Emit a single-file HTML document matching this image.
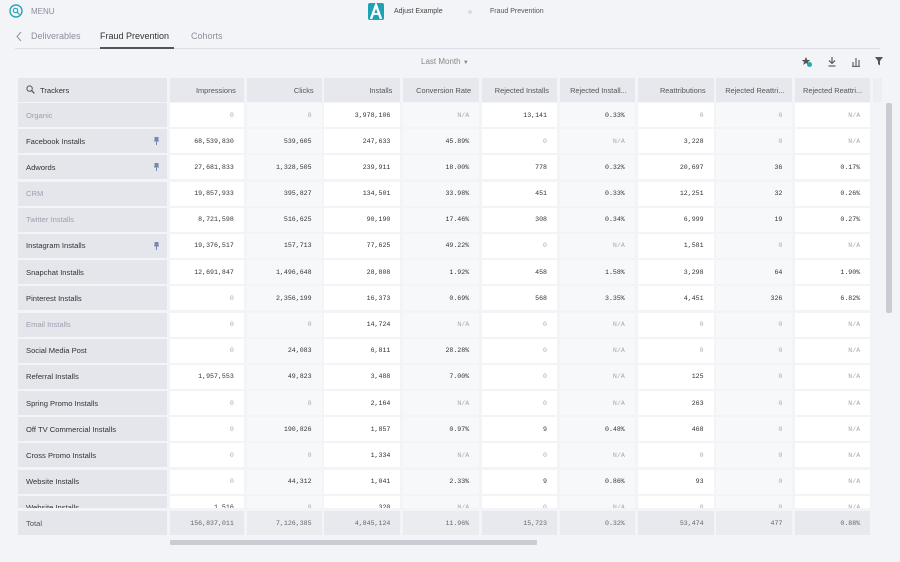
<!DOCTYPE html>
<html><head><meta charset="utf-8"><style>
*{margin:0;padding:0;box-sizing:border-box}
body{width:900px;height:562px;background:#f3f4f7;font-family:"Liberation Sans",sans-serif;position:relative;overflow:hidden;color:#333}
.abs{position:absolute}
.grid{position:absolute;left:18px;display:grid;grid-template-columns:149px 74px 75px 76px 76px 75px 75px 76px 76px 75px 9px;column-gap:2.8px}
.grid div{height:24px;display:flex;align-items:center;justify-content:flex-end;padding-right:10px;font-family:"Liberation Mono",monospace;font-size:6.6px;color:#333;background:#fff}
.grid div:nth-child(11n+3),.grid div:nth-child(11n+5),.grid div:nth-child(11n+7),.grid div:nth-child(11n+9){background:#f7f8fa}
.grid div:nth-child(11n+1){justify-content:space-between;padding:0 8px 0 8px;font-family:"Liberation Sans",sans-serif;font-size:7.6px;background:#e4e6ec;color:#333}
.grid div:nth-child(11n){background:#f3f4f7;padding:0}
.grid .z{color:#aaa}
.grid div.g{color:#9aa0b0}
.hd div{background:#e6e8ee!important;font-family:"Liberation Sans",sans-serif;font-size:7.4px;color:#555;padding-right:8px}
.hd div:nth-child(1){background:#e4e6ec!important;justify-content:flex-start!important}
.hd div:nth-child(11){background:#eceef2!important}
.tot div{background:#e7e9ee!important;color:#666}
.tot div:nth-child(odd){background:#eaecf0!important}
.tot div:nth-child(1){background:#e4e6ec!important;color:#555}
.tot div:nth-child(11){background:#f3f4f7!important}
.pin{width:5px;height:8px;display:inline-block}
</style></head><body>
<svg class="abs" style="left:9px;top:4px" width="14" height="14" viewBox="0 0 14 14"><circle cx="7" cy="7" r="6" fill="none" stroke="#2aa6b5" stroke-width="1.4"/><circle cx="6.5" cy="6.5" r="2.2" fill="none" stroke="#2aa6b5" stroke-width="1.2"/><path d="M8 8l2.5 2.5" stroke="#2aa6b5" stroke-width="1.2"/></svg>
<div class="abs" style="left:31px;top:7px;font-size:8px;color:#8a8f9c">MENU</div>
<svg class="abs" style="left:367px;top:3px" width="18" height="17" viewBox="0 0 18 17"><rect x="1" y="0" width="16" height="17" rx="2" fill="#1fa2b4"/><path d="M4 16L9 2l5 14" fill="none" stroke="#fff" stroke-width="2.4"/><path d="M6 11h6" stroke="#fff" stroke-width="1.8"/></svg>
<div class="abs" style="left:394px;top:8px;font-size:7px;color:#444">Adjust Example</div>
<div class="abs" style="left:468px;top:10px;width:4px;height:4px;border-radius:2px;background:#d8dbe2"></div>
<div class="abs" style="left:490px;top:8px;font-size:7px;color:#555">Fraud Prevention</div>
<svg class="abs" style="left:15px;top:31px" width="8" height="11" viewBox="0 0 8 11"><path d="M6 1L2 5.5 6 10" fill="none" stroke="#999" stroke-width="1.1"/></svg>
<div class="abs" style="left:31px;top:31px;font-size:9px;color:#8a8f9c">Deliverables</div>
<div class="abs" style="left:100px;top:31px;font-size:9px;color:#333">Fraud Prevention</div>
<div class="abs" style="left:191px;top:31px;font-size:9px;color:#8a8f9c">Cohorts</div>
<div class="abs" style="left:15px;top:48px;width:865px;height:1px;background:#dcdfe5"></div>
<div class="abs" style="left:100px;top:46.5px;width:74px;height:2px;background:#555"></div>
<div class="abs" style="left:421px;top:57px;font-size:8px;color:#888">Last Month <span style="font-size:6px">▼</span></div>
<svg class="abs" style="left:801px;top:56px" width="12" height="12" viewBox="0 0 12 12"><path d="M5 1l1.3 3h3l-2.4 2 1 3-2.9-1.9L2.1 9l1-3L.7 4h3z" fill="#555"/><circle cx="8.5" cy="8.5" r="2.5" fill="#2aa6b5"/></svg>
<svg class="abs" style="left:827px;top:56px" width="10" height="11" viewBox="0 0 10 11"><path d="M5 1v6M2 4.5L5 7.5 8 4.5M1.5 10h7" fill="none" stroke="#666" stroke-width="1.3"/></svg>
<svg class="abs" style="left:851px;top:56px" width="10" height="11" viewBox="0 0 10 11"><path d="M2 10V6M5 10V2M8 10V4M1 10.5h8" stroke="#666" stroke-width="1.2"/></svg>
<svg class="abs" style="left:874px;top:56px" width="10" height="11" viewBox="0 0 10 11"><path d="M1 1h8L6 5v4.5L4 8V5z" fill="#555"/></svg>

<div class="grid hd" style="top:78px">
<div><span><svg width="9" height="9" viewBox="0 0 9 9" style="vertical-align:-1px;margin-right:5px"><circle cx="3.6" cy="3.6" r="2.7" fill="none" stroke="#555" stroke-width="1"/><path d="M5.6 5.6l2.8 2.8" stroke="#555" stroke-width="1.2"/></svg>Trackers</span></div><div>Impressions</div><div>Clicks</div><div>Installs</div><div>Conversion Rate</div><div>Rejected Installs</div><div>Rejected Install...</div><div>Reattributions</div><div>Rejected Reattri...</div><div>Rejected Reattri...</div><div></div>
</div>

<div class="abs" style="left:0;top:103px;width:885px;height:405px;overflow:hidden">
<div class="grid" style="top:0;row-gap:2.2px">
<div class="g">Organic</div><div class="z">0</div><div class="z">0</div><div>3,978,106</div><div class="z">N/A</div><div>13,141</div><div>0.33%</div><div class="z">0</div><div class="z">0</div><div class="z">N/A</div><div></div>
<div><span>Facebook Installs</span><svg class="pin" viewBox="0 0 5 8"><path d="M1 0h3v4H1zM0 4h5M2.5 4v4" stroke="#7a86b0" fill="#7a86b0"/></svg></div><div>68,539,830</div><div>539,605</div><div>247,633</div><div>45.89%</div><div class="z">0</div><div class="z">N/A</div><div>3,228</div><div class="z">0</div><div class="z">N/A</div><div></div>
<div><span>Adwords</span><svg class="pin" viewBox="0 0 5 8"><path d="M1 0h3v4H1zM0 4h5M2.5 4v4" stroke="#7a86b0" fill="#7a86b0"/></svg></div><div>27,681,833</div><div>1,328,505</div><div>239,911</div><div>18.00%</div><div>778</div><div>0.32%</div><div>20,697</div><div>36</div><div>0.17%</div><div></div>
<div class="g">CRM</div><div>19,857,933</div><div>395,827</div><div>134,501</div><div>33.98%</div><div>451</div><div>0.33%</div><div>12,251</div><div>32</div><div>0.26%</div><div></div>
<div class="g">Twitter Installs</div><div>8,721,598</div><div>516,625</div><div>90,190</div><div>17.46%</div><div>308</div><div>0.34%</div><div>6,999</div><div>19</div><div>0.27%</div><div></div>
<div><span>Instagram Installs</span><svg class="pin" viewBox="0 0 5 8"><path d="M1 0h3v4H1zM0 4h5M2.5 4v4" stroke="#7a86b0" fill="#7a86b0"/></svg></div><div>19,376,517</div><div>157,713</div><div>77,625</div><div>49.22%</div><div class="z">0</div><div class="z">N/A</div><div>1,581</div><div class="z">0</div><div class="z">N/A</div><div></div>
<div>Snapchat Installs</div><div>12,691,847</div><div>1,496,648</div><div>28,808</div><div>1.92%</div><div>458</div><div>1.58%</div><div>3,298</div><div>64</div><div>1.90%</div><div></div>
<div>Pinterest Installs</div><div class="z">0</div><div>2,356,199</div><div>16,373</div><div>0.69%</div><div>568</div><div>3.35%</div><div>4,451</div><div>326</div><div>6.82%</div><div></div>
<div class="g">Email Installs</div><div class="z">0</div><div class="z">0</div><div>14,724</div><div class="z">N/A</div><div class="z">0</div><div class="z">N/A</div><div class="z">0</div><div class="z">0</div><div class="z">N/A</div><div></div>
<div>Social Media Post</div><div class="z">0</div><div>24,083</div><div>6,811</div><div>28.28%</div><div class="z">0</div><div class="z">N/A</div><div class="z">0</div><div class="z">0</div><div class="z">N/A</div><div></div>
<div>Referral Installs</div><div>1,957,553</div><div>49,823</div><div>3,488</div><div>7.00%</div><div class="z">0</div><div class="z">N/A</div><div>125</div><div class="z">0</div><div class="z">N/A</div><div></div>
<div>Spring Promo Installs</div><div class="z">0</div><div class="z">0</div><div>2,164</div><div class="z">N/A</div><div class="z">0</div><div class="z">N/A</div><div>263</div><div class="z">0</div><div class="z">N/A</div><div></div>
<div>Off TV Commercial Installs</div><div class="z">0</div><div>190,826</div><div>1,857</div><div>0.97%</div><div>9</div><div>0.48%</div><div>468</div><div class="z">0</div><div class="z">N/A</div><div></div>
<div>Cross Promo Installs</div><div class="z">0</div><div class="z">0</div><div>1,334</div><div class="z">N/A</div><div class="z">0</div><div class="z">N/A</div><div class="z">0</div><div class="z">0</div><div class="z">N/A</div><div></div>
<div>Website Installs</div><div class="z">0</div><div>44,312</div><div>1,041</div><div>2.33%</div><div>9</div><div>0.86%</div><div>93</div><div class="z">0</div><div class="z">N/A</div><div></div>
<div>Website Installs</div><div>1,516</div><div class="z">0</div><div>320</div><div class="z">N/A</div><div class="z">0</div><div class="z">N/A</div><div class="z">0</div><div class="z">0</div><div class="z">N/A</div><div></div>
</div>
</div>
<div class="abs" style="left:886px;top:103px;width:6px;height:210px;background:#c9ccd3;border-radius:2px"></div>

<div class="grid tot" style="top:511px">
<div>Total</div><div>156,837,011</div><div>7,126,385</div><div>4,845,124</div><div>11.96%</div><div>15,723</div><div>0.32%</div><div>53,474</div><div>477</div><div>0.88%</div><div></div>
</div>
<div class="abs" style="left:170px;top:540px;width:367px;height:5px;background:#c9ccd3;border-radius:1px"></div>
</body></html>
